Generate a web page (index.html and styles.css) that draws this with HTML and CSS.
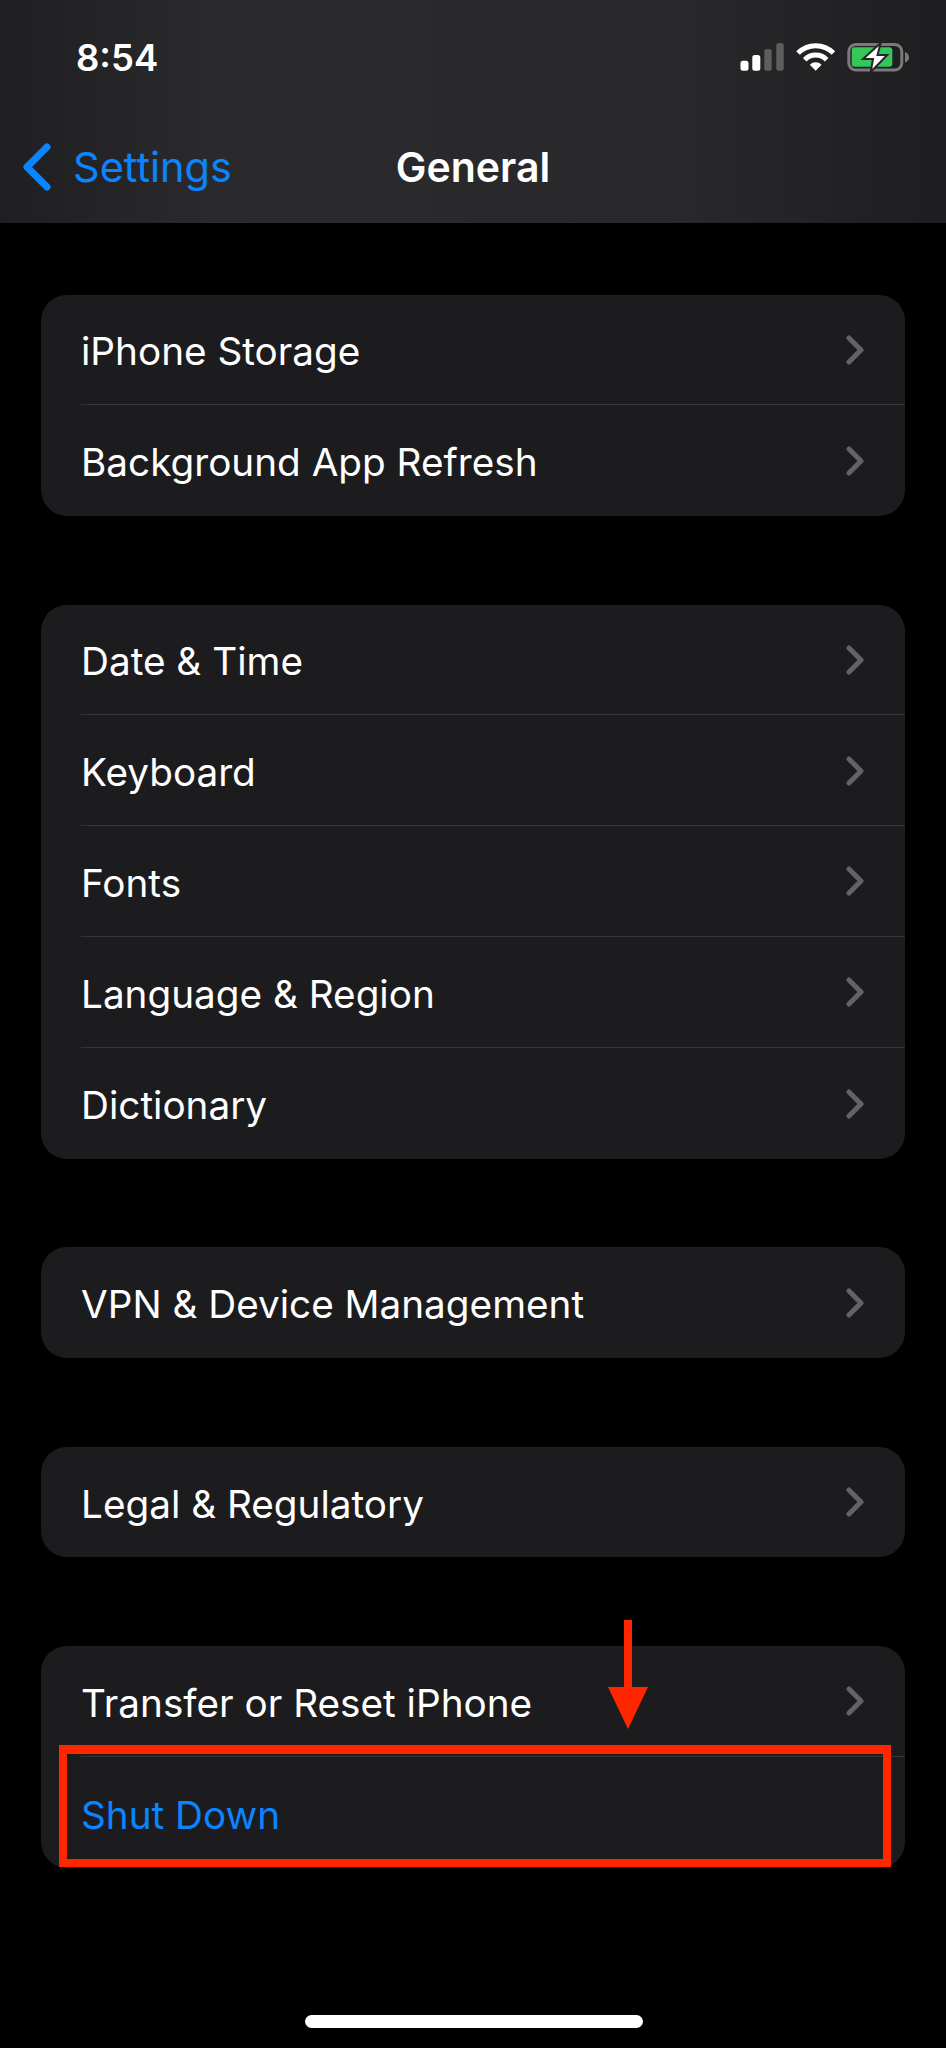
FILE: index.html
```html
<!DOCTYPE html>
<html lang="en">
<head>
    <meta charset="UTF-8">
    <meta name="viewport" content="width=device-width, initial-scale=1.0">
    <title>General</title>
    <link rel="stylesheet" href="styles.css">
</head>
<body>
    <div class="screen">
        <header class="header">
            <div class="status">
                <span class="time">8:54</span>
                <svg class="status-icons" width="170" height="30" viewBox="0 0 170 30">
                    <rect x="0.5" y="17.7" width="8" height="10" rx="2.5" fill="#fff"/>
                    <rect x="12.3" y="12" width="8" height="15.7" rx="2.5" fill="#fff"/>
                    <rect x="24.3" y="6" width="7.4" height="21.7" rx="2.5" fill="#5e5e5e"/>
                    <rect x="36.3" y="0" width="7.4" height="27.7" rx="2.5" fill="#5e5e5e"/>
                    <path d="M58 10 A25 25 0 0 1 93.4 10" fill="none" stroke="#fff" stroke-width="5"/>
                    <path d="M64.7 16.7 A15.5 15.5 0 0 1 86.7 16.7" fill="none" stroke="#fff" stroke-width="5"/>
                    <path d="M75.7 27.7 L69.8 21.8 A8.3 8.3 0 0 1 81.6 21.8 Z" fill="#fff"/>
                    <rect x="108.8" y="1.5" width="53" height="25.5" rx="7" fill="none" stroke="#7a7a7a" stroke-width="3"/>
                    <rect x="111.7" y="4.3" width="40.6" height="19.4" rx="3" fill="#34c759"/>
                    <path d="M165 9 C168 10 169 12 169 14.3 C169 16.6 168 18.6 165 19.6 Z" fill="#7a7a7a"/>
                    <path d="M140.7 0 L123 16 H133 L130.7 29 L147.3 12 H137.5 Z" fill="#fff" stroke="#26262a" stroke-width="2"/>
                </svg>
            </div>
            <nav class="navbar">
                <div class="back">
                    <svg width="32" height="50" viewBox="0 0 32 50">
                        <path d="M26 5 L6 25 L26 45" fill="none" stroke="#0a84ff" stroke-width="7" stroke-linecap="round" stroke-linejoin="round"/>
                    </svg>
                    <span>Settings</span>
                </div>
                <h1 class="title">General</h1>
            </nav>
        </header>

        <main class="list">
            <section class="group">
                <div class="row"><span>iPhone Storage</span><svg class="chevron" width="18" height="30" viewBox="0 0 18 30"><path d="M3 3 L15 15 L3 27"/></svg></div>
                <div class="row"><span>Background App Refresh</span><svg class="chevron" width="18" height="30" viewBox="0 0 18 30"><path d="M3 3 L15 15 L3 27"/></svg></div>
            </section>
            <section class="group">
                <div class="row"><span>Date &amp; Time</span><svg class="chevron" width="18" height="30" viewBox="0 0 18 30"><path d="M3 3 L15 15 L3 27"/></svg></div>
                <div class="row"><span>Keyboard</span><svg class="chevron" width="18" height="30" viewBox="0 0 18 30"><path d="M3 3 L15 15 L3 27"/></svg></div>
                <div class="row"><span>Fonts</span><svg class="chevron" width="18" height="30" viewBox="0 0 18 30"><path d="M3 3 L15 15 L3 27"/></svg></div>
                <div class="row"><span>Language &amp; Region</span><svg class="chevron" width="18" height="30" viewBox="0 0 18 30"><path d="M3 3 L15 15 L3 27"/></svg></div>
                <div class="row"><span>Dictionary</span><svg class="chevron" width="18" height="30" viewBox="0 0 18 30"><path d="M3 3 L15 15 L3 27"/></svg></div>
            </section>
            <section class="group">
                <div class="row"><span>VPN &amp; Device Management</span><svg class="chevron" width="18" height="30" viewBox="0 0 18 30"><path d="M3 3 L15 15 L3 27"/></svg></div>
            </section>
            <section class="group">
                <div class="row"><span>Legal &amp; Regulatory</span><svg class="chevron" width="18" height="30" viewBox="0 0 18 30"><path d="M3 3 L15 15 L3 27"/></svg></div>
            </section>
            <section class="group">
                <div class="row"><span>Transfer or Reset iPhone</span><svg class="chevron" width="18" height="30" viewBox="0 0 18 30"><path d="M3 3 L15 15 L3 27"/></svg></div>
                <div class="row shutdown"><span>Shut Down</span></div>
            </section>
        </main>

        <!-- annotation drawn over the screenshot -->
        <svg class="arrow" width="44" height="110" viewBox="0 0 44 110">
            <path d="M18 0 H26 V67 H42 L22 109 L2 67 H18 Z" fill="#ff2600"/>
        </svg>
        <div class="highlight"></div>
        <div class="home-bar"></div>
    </div>
</body>
</html>
```

FILE: styles.css
```css
html, body {
    margin: 0;
    padding: 0;
    background-color: #000000;
}
.screen {
    position: relative;
    width: 946px;
    height: 2048px;
    overflow: hidden;
    font-family: Inter, "Liberation Sans", Arial, sans-serif;
    color: #ffffff;
}
.header {
    height: 223px;
    box-sizing: border-box;
    background: linear-gradient(90deg, #1f1f21 0%, #2a2a2c 22%, #29292b 70%, #1e1e20 100%);
}
.status {
    display: flex;
    justify-content: space-between;
    align-items: center;
    height: 30px;
    padding: 43px 36px 0 76px;
}
.time {
    font-size: 36.5px;
    font-weight: 600;
}
.navbar {
    position: relative;
    display: flex;
    align-items: center;
    justify-content: center;
    height: 60px;
    margin-top: 64px;
}
.back {
    position: absolute;
    left: 21px;
    top: 5px;
    display: flex;
    align-items: center;
    gap: 20px;
    font-size: 41.5px;
    color: #0a84ff;
}
.title {
    margin: 0;
    font-size: 41px;
    font-weight: 600;
}
.list {
    display: flex;
    flex-direction: column;
    gap: 88.6px;
    padding: 71.5px 41px 0;
}
.group {
    background-color: #1c1c1e;
    border-radius: 26px;
    overflow: hidden;
}
.row {
    display: flex;
    align-items: center;
    justify-content: space-between;
    box-sizing: border-box;
    height: 110.8px;
    margin-left: 40px;
    padding-top: 3.5px;
    padding-right: 41px;
    font-size: 38.7px;
    border-bottom: 1.5px solid #363638;
}
.row:last-child {
    border-bottom: none;
}
.chevron {
    margin-top: -3px;
}
.chevron path {
    fill: none;
    stroke: #636366;
    stroke-width: 5;
    stroke-linecap: round;
    stroke-linejoin: round;
}
.shutdown {
    color: #0a84ff;
    padding-top: 6px;
}
.arrow {
    position: absolute;
    left: 606px;
    top: 1620px;
}
.highlight {
    position: absolute;
    left: 59px;
    top: 1745px;
    width: 832px;
    height: 122px;
    box-sizing: border-box;
    border: 8px solid #ff2600;
    border-top-width: 9px;
}
.home-bar {
    position: absolute;
    left: 305px;
    top: 2015px;
    width: 338px;
    height: 13px;
    border-radius: 7px;
    background-color: #ffffff;
}
```
